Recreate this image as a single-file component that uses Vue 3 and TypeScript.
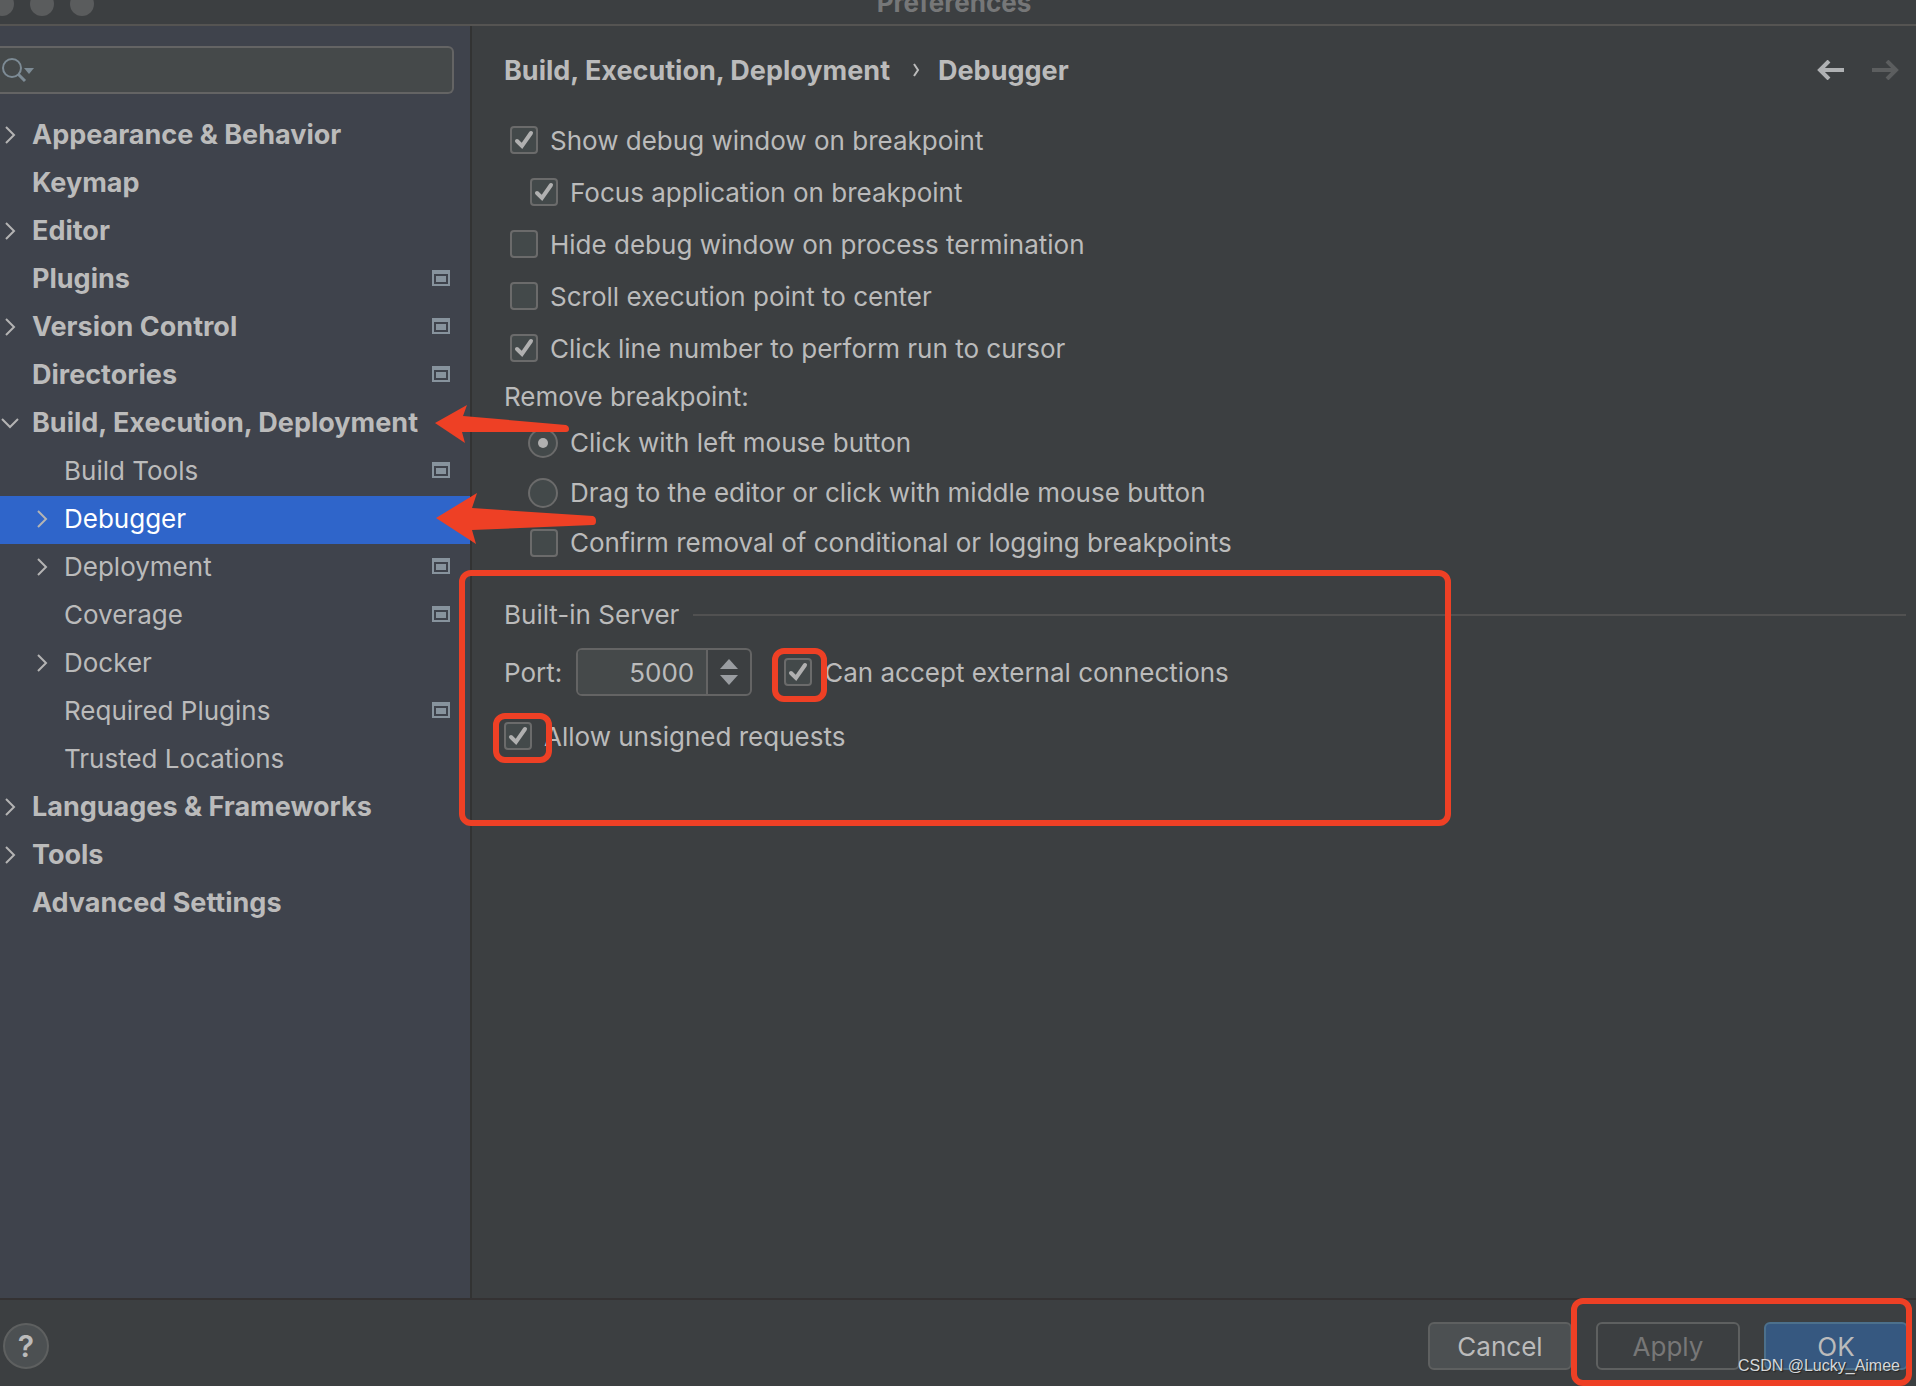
<script setup lang="ts">
import { ref } from 'vue'

interface TreeItem {
  label: string
  level: 0 | 1
  arrow?: 'right' | 'down'
  project?: boolean
  marker?: 'small' | 'large'
}

const items: TreeItem[] = [
  { label: 'Appearance & Behavior', level: 0, arrow: 'right' },
  { label: 'Keymap', level: 0 },
  { label: 'Editor', level: 0, arrow: 'right' },
  { label: 'Plugins', level: 0, project: true },
  { label: 'Version Control', level: 0, arrow: 'right', project: true },
  { label: 'Directories', level: 0, project: true },
  { label: 'Build, Execution, Deployment', level: 0, arrow: 'down', marker: 'small' },
  { label: 'Build Tools', level: 1, project: true },
  { label: 'Debugger', level: 1, arrow: 'right', marker: 'large' },
  { label: 'Deployment', level: 1, arrow: 'right', project: true },
  { label: 'Coverage', level: 1, project: true },
  { label: 'Docker', level: 1, arrow: 'right' },
  { label: 'Required Plugins', level: 1, project: true },
  { label: 'Trusted Locations', level: 1 },
  { label: 'Languages & Frameworks', level: 0, arrow: 'right' },
  { label: 'Tools', level: 0, arrow: 'right' },
  { label: 'Advanced Settings', level: 0 },
]

const selected = ref('Debugger')
const query = ref('')

const windowOptions = ref([
  { label: 'Show debug window on breakpoint', checked: true, nested: false },
  { label: 'Focus application on breakpoint', checked: true, nested: true },
  { label: 'Hide debug window on process termination', checked: false, nested: false },
  { label: 'Scroll execution point to center', checked: false, nested: false },
  { label: 'Click line number to perform run to cursor', checked: true, nested: false },
])

const removeMode = ref('left')
const confirmRemoval = ref(false)
const port = ref(5000)
const acceptExternal = ref(true)
const allowUnsigned = ref(true)
</script>

<template>
  <div class="window">
    <header class="titlebar">
      <div class="lights"><span></span><span></span><span></span></div>
      <span class="title">Preferences</span>
    </header>

    <div class="body">
      <aside class="sidebar">
        <div class="search">
          <svg width="34" height="26" viewBox="0 0 34 26" aria-hidden="true">
            <circle cx="12" cy="11" r="9" fill="none" stroke="#7d8b95" stroke-width="2" />
            <path d="M18 17 L25 24" stroke="#7d8b95" stroke-width="3" />
            <path d="M24 11 H34 L29 17 Z" fill="#7d8b95" />
          </svg>
          <input v-model="query" type="text" aria-label="Search settings" />
        </div>

        <nav class="tree">
          <button
            v-for="item in items"
            :key="item.label"
            type="button"
            class="node"
            :class="{ child: item.level === 1, selected: item.label === selected }"
            @click="selected = item.label"
          >
            <span class="chevron">
              <svg v-if="item.arrow === 'right'" width="20" height="20" viewBox="0 0 20 20">
                <path d="M6 2 L14 10 L6 18" fill="none" stroke="#b4b4b4" stroke-width="2" />
              </svg>
              <svg v-else-if="item.arrow === 'down'" width="20" height="20" viewBox="0 0 20 20">
                <path d="M2 6 L10 14 L18 6" fill="none" stroke="#b4b4b4" stroke-width="2" />
              </svg>
            </span>
            <span class="node-label">{{ item.label }}</span>
            <svg v-if="item.project" width="18" height="18" viewBox="0 0 18 18">
              <path fill="#87939d" fill-rule="evenodd" d="M0 0H18V16H0Z M2 4V14H16V4Z M4 6H14V12H4Z" />
            </svg>
            <svg v-if="item.marker === 'small'" class="pointer small" width="136" height="40" viewBox="0 0 136 40">
              <path fill="#ee4025" d="M0 19 L32 1 L28 12 L131 21 Q134 22 134 25 Q134 28 131 28 L27 28 L30 39 Z" />
            </svg>
            <svg v-if="item.marker === 'large'" class="pointer large" width="162" height="52" viewBox="0 0 162 52">
              <path fill="#ee4025" d="M1 26 L42 1 L37 16 L158 24 Q161 25 161 29 Q161 33 158 33 L37 38 L41 52 Z" />
            </svg>
          </button>
        </nav>
      </aside>

      <main class="content">
        <div class="crumbs">
          <span class="text">Build, Execution, Deployment</span>
          <svg class="separator" width="8" height="16" viewBox="0 0 8 16" aria-hidden="true">
            <path d="M2 2 L6 8 L2 14" fill="none" stroke="#bbbbbb" stroke-width="2" />
          </svg>
          <span class="text">Debugger</span>
          <div class="history">
            <button type="button" aria-label="Back">
              <svg width="28" height="20" viewBox="0 0 28 20">
                <path d="M27 10 H3 M12 1 L3 10 L12 19" fill="none" stroke="#afb1b3" stroke-width="4" />
              </svg>
            </button>
            <button type="button" aria-label="Forward" disabled>
              <svg width="28" height="20" viewBox="0 0 28 20">
                <path d="M1 10 H25 M16 1 L25 10 L16 19" fill="none" stroke="#5c5e5f" stroke-width="4" />
              </svg>
            </button>
          </div>
        </div>

        <label v-for="option in windowOptions" :key="option.label" class="option" :class="{ nested: option.nested }">
          <span class="tick">
            <input v-model="option.checked" type="checkbox" />
            <svg v-if="option.checked" width="28" height="28" viewBox="0 0 28 28">
              <path class="mark" d="M7 15 L12 20 L21 7" />
            </svg>
          </span>
          <span class="text">{{ option.label }}</span>
        </label>

        <div class="group-label">Remove breakpoint:</div>
        <label class="option compact">
          <input v-model="removeMode" type="radio" name="remove" value="left" />
          <span>Click with left mouse button</span>
        </label>
        <label class="option compact">
          <input v-model="removeMode" type="radio" name="remove" value="middle" />
          <span>Drag to the editor or click with middle mouse button</span>
        </label>
        <label class="option compact nested">
          <span class="tick">
            <input v-model="confirmRemoval" type="checkbox" />
            <svg v-if="confirmRemoval" width="28" height="28" viewBox="0 0 28 28">
              <path class="mark" d="M7 15 L12 20 L21 7" />
            </svg>
          </span>
          <span>Confirm removal of conditional or logging breakpoints</span>
        </label>

        <section class="server">
          <h2>Built-in Server</h2>
          <div class="port-row">
            <label for="port" class="text">Port:</label>
            <div class="spinner">
              <input id="port" v-model.number="port" class="text" type="text" inputmode="numeric" />
              <div class="steps">
                <button type="button" aria-label="Increase" @click="port++">
                  <svg width="18" height="10" viewBox="0 0 18 10"><path d="M0 10 L9 0 L18 10 Z" fill="#9a9da1" /></svg>
                </button>
                <button type="button" aria-label="Decrease" @click="port--">
                  <svg width="18" height="10" viewBox="0 0 18 10"><path d="M0 0 L9 10 L18 0 Z" fill="#9a9da1" /></svg>
                </button>
              </div>
            </div>
            <label class="option server-option">
              <span class="tick">
                <input v-model="acceptExternal" type="checkbox" />
                <svg v-if="acceptExternal" width="28" height="28" viewBox="0 0 28 28">
                  <path class="mark" d="M7 15 L12 20 L21 7" />
                </svg>
              </span>
              <span class="text">Can accept external connections</span>
              <span class="outline outline-external"></span>
            </label>
          </div>
          <label class="option server-option unsigned">
            <span class="tick">
              <input v-model="allowUnsigned" type="checkbox" />
              <svg v-if="allowUnsigned" width="28" height="28" viewBox="0 0 28 28">
                <path class="mark" d="M7 15 L12 20 L21 7" />
              </svg>
            </span>
            <span class="text">Allow unsigned requests</span>
            <span class="outline outline-unsigned"></span>
          </label>
          <span class="outline outline-server"></span>
        </section>
      </main>
    </div>

    <footer class="footer">
      <button type="button" class="help" aria-label="Help">?</button>
      <div class="actions">
        <button type="button" class="action">Cancel</button>
        <button type="button" class="action" disabled>Apply</button>
        <button type="button" class="action primary">OK</button>
        <span class="outline outline-actions"></span>
        <span class="watermark">CSDN @Lucky_Aimee</span>
      </div>
    </footer>
  </div>
</template>

<style>
body {
  margin: 0;
  background: #3c3f41;
}
</style>

<style scoped>
.window,
.window * {
  box-sizing: border-box;
}

.window {
  display: flex;
  flex-direction: column;
  min-height: 100vh;
  overflow: hidden;
  background: #3c3f41;
  color: #bbbbbb;
  font-family: Inter, "Liberation Sans", sans-serif;
  font-size: 26px;
  line-height: 30px;
}

button,
input {
  margin: 0;
  padding: 0;
  border: 0;
  background: none;
  color: inherit;
  font: inherit;
}

svg {
  display: block;
  flex: none;
}

.text {
  padding-top: 2px;
}

.titlebar {
  display: grid;
  grid-template-columns: 1fr auto 1fr;
  grid-template-rows: 18px;
  align-items: end;
  height: 26px;
  padding-right: 8px;
  border-bottom: 2px solid #555452;
  overflow: hidden;
}

.lights {
  display: flex;
  gap: 16px;
  margin: 0 0 2px -10px;
}

.lights span {
  width: 24px;
  height: 24px;
  border-radius: 50%;
  background: #5a5c5d;
}

.title {
  color: #767778;
  font-weight: 700;
}

.body {
  display: flex;
  flex: 1;
}

.sidebar {
  position: relative;
  z-index: 1;
  flex: none;
  width: 472px;
  padding-top: 20px;
  border-right: 2px solid #323333;
  background: #3f434c;
}

.search {
  display: flex;
  align-items: center;
  height: 48px;
  margin-right: 16px;
  border: 2px solid #646464;
  border-left: 0;
  border-radius: 0 6px 6px 0;
  background: #45494a;
}

.search input {
  flex: 1;
  min-width: 0;
  height: 100%;
  padding-left: 8px;
  outline: 0;
}

.tree {
  display: flex;
  flex-direction: column;
  margin-top: 18px;
}

.node {
  position: relative;
  display: flex;
  align-items: center;
  height: 48px;
  padding: 0 20px 2px 0;
  font-size: 27px;
  font-weight: 700;
  text-align: left;
  white-space: nowrap;
}

.node.child {
  padding-left: 32px;
  font-size: 26px;
  font-weight: 400;
}

.node.selected {
  background: #2f65ca;
  color: #ffffff;
}

.chevron {
  flex: none;
  width: 32px;
  height: 20px;
  color: #b4b4b4;
}

.node-label {
  flex: 1;
}

.pointer {
  position: absolute;
  left: 435px;
}

.pointer.small {
  top: 4px;
}

.pointer.large {
  top: -4px;
}

.content {
  flex: 1;
  min-width: 0;
  padding: 0 10px 40px 32px;
}

.crumbs {
  display: flex;
  align-items: center;
  height: 88px;
  font-size: 27px;
  font-weight: 700;
}

.separator {
  margin: 0 18px 0 22px;
}

.history {
  display: flex;
  gap: 26px;
  margin-left: auto;
  padding-right: 7px;
}

.option {
  position: relative;
  display: flex;
  align-items: center;
  gap: 12px;
  width: fit-content;
  height: 52px;
  margin-left: 6px;
  white-space: nowrap;
}

.option.compact {
  height: 50px;
  margin-left: 24px;
}

.option.nested {
  margin-left: 26px;
}

.tick {
  display: grid;
}

.tick > * {
  grid-area: 1 / 1;
  pointer-events: none;
}

.mark {
  fill: none;
  stroke: #b0b0b0;
  stroke-width: 4;
  stroke-linecap: round;
}

.tick input,
.option input[type="radio"] {
  appearance: none;
  width: 28px;
  height: 28px;
  border: 2px solid #6b6b6b;
  border-radius: 4px;
  background: #43494a;
}

.option input[type="radio"] {
  display: grid;
  place-items: center;
  width: 30px;
  height: 30px;
  border-radius: 50%;
}

.option input[type="radio"]:checked::after {
  content: "";
  width: 10px;
  height: 10px;
  border-radius: 50%;
  background: #b0b0b0;
}

.group-label {
  height: 44px;
  line-height: 46px;
}

.server {
  position: relative;
  margin-top: 32px;
}

.server h2 {
  display: flex;
  align-items: center;
  gap: 14px;
  margin: 0 0 18px;
  font-size: 26px;
  font-weight: 400;
}

.server h2::after {
  content: "";
  flex: 1;
  height: 2px;
  background: #515151;
}

.port-row {
  display: flex;
  align-items: center;
  height: 48px;
}

.spinner {
  display: flex;
  width: 176px;
  height: 48px;
  margin: 0 32px 0 14px;
  border: 2px solid #646464;
  border-radius: 6px;
  overflow: hidden;
}

.spinner input {
  flex: 1;
  min-width: 0;
  padding-right: 12px;
  background: #45494a;
  text-align: right;
  outline: 0;
}

.steps {
  display: flex;
  flex-direction: column;
  align-items: center;
  justify-content: center;
  gap: 6px;
  width: 44px;
  border-left: 2px solid #646464;
}

.option.server-option {
  margin-left: 0;
}

.option.unsigned {
  margin-top: 14px;
}

.outline {
  position: absolute;
  border: 6px solid #ee4025;
  border-radius: 12px;
  pointer-events: none;
}

.outline-external {
  top: 2px;
  left: -12px;
  width: 55px;
  height: 54px;
}

.outline-unsigned {
  top: 3px;
  left: -11px;
  width: 59px;
  height: 50px;
}

.outline-server {
  top: -30px;
  left: -45px;
  z-index: 2;
  width: 992px;
  height: 256px;
}

.footer {
  display: flex;
  align-items: center;
  justify-content: space-between;
  height: 88px;
  padding: 6px 8px 0 3px;
  border-top: 2px solid #343233;
}

.help {
  width: 46px;
  height: 46px;
  border: 2px solid #5e6060;
  border-radius: 50%;
  background: #4c5052;
  font-size: 30px;
  font-weight: 600;
}

.actions {
  position: relative;
  display: flex;
  gap: 24px;
}

.action {
  width: 144px;
  height: 48px;
  padding-top: 2px;
  border: 2px solid #5e6060;
  border-radius: 6px;
  background: #4c5052;
}

.action:disabled {
  background: none;
  color: #777777;
}

.action.primary {
  border-color: #4c708c;
  background: #365880;
}

.outline-actions {
  top: -24px;
  right: -4px;
  width: 341px;
  height: 88px;
}

.watermark {
  position: absolute;
  right: 8px;
  bottom: -6px;
  color: #d5d8da;
  font-family: "Liberation Sans", sans-serif;
  font-size: 16px;
  line-height: 20px;
  text-shadow: 1px 1px 1px #222222;
  pointer-events: none;
}
</style>
